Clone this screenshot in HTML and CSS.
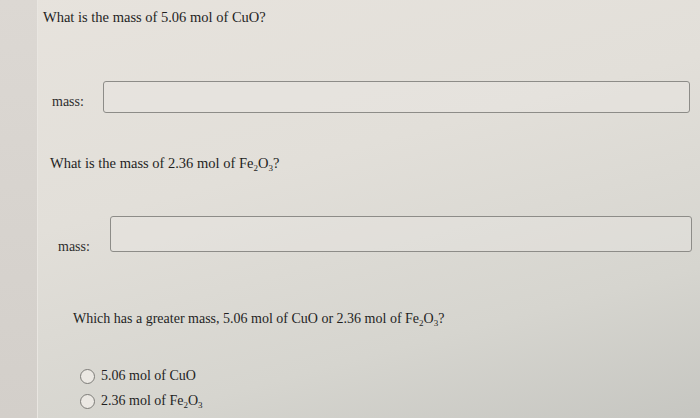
FILE: index.html
```html
<!DOCTYPE html>
<html>
<head>
<meta charset="utf-8">
<link rel="stylesheet" href="styles.css">
</head>
<body>
<div class="page">
  <div class="rail"></div>
  <div class="main">
    <p class="q q1">What is the mass of 5.06 mol of CuO?</p>
    <div class="row row1">
      <span class="lbl">mass:</span>
      <div class="box"></div>
    </div>
    <p class="q q2">What is the mass of 2.36 mol of Fe<sub>2</sub>O<sub>3</sub>?</p>
    <div class="row row2">
      <span class="lbl">mass:</span>
      <div class="box"></div>
    </div>
    <p class="q q3">Which has a greater mass, 5.06 mol of CuO or 2.36 mol of Fe<sub>2</sub>O<sub>3</sub>?</p>
    <div class="opt opt1"><span class="radio"></span><span class="otext">5.06 mol of CuO</span></div>
    <div class="opt opt2"><span class="radio"></span><span class="otext">2.36 mol of Fe<sub>2</sub>O<sub>3</sub></span></div>
  </div>
</div>
</body>
</html>
```

FILE: styles.css
```css
html, body {
  margin: 0;
  padding: 0;
}
body {
  width: 700px;
  height: 418px;
  overflow: hidden;
  font-family: "Liberation Serif", "Times New Roman", serif;
  color: #1f1f1f;
}
.page {
  display: flex;
  width: 700px;
  height: 418px;
  background: linear-gradient(165deg, #e7e3dd 0%, #e2dfd9 40%, #d6d5cf 75%, #c6c6c1 100%);
}
.rail {
  width: 37px;
  flex: none;
  background: linear-gradient(180deg, #dcd8d3 0%, #d3cfca 100%);
  border-right: 1px solid #e9e6e1;
}
.main {
  flex: 1;
  display: flex;
  flex-direction: column;
  align-items: flex-start;
}
.q {
  margin: 0;
  font-family: "Liberation Serif", "Times New Roman", serif;
  font-size: 14.5px;
  line-height: 18px;
}
.q1 { margin-top: 8px; margin-left: 5px; }
.q2 { margin-top: 41px; margin-left: 12px; }
.q3 { margin-top: 54px; margin-left: 35px; font-size: 14px; }
sub {
  font-size: 9px;
  line-height: 0;
  vertical-align: -3px;
}
.row {
  display: flex;
  align-items: flex-start;
  align-self: stretch;
}
.lbl {
  font-family: "Liberation Serif", "Times New Roman", serif;
  font-size: 14px;
  line-height: 18px;
  color: #2e2e2e;
}
.box {
  flex: 1;
  box-sizing: border-box;
  border: 1.5px solid #8d8c88;
  border-radius: 3px;
  background: rgba(236, 233, 228, 0.35);
}
.row1 { margin-top: 55px; margin-left: 14px; margin-right: 10px; }
.row1 .lbl { margin-top: 12px; width: 51px; }
.row1 .box { height: 32px; }
.row2 { margin-top: 44px; margin-left: 20px; margin-right: 8px; }
.row2 .lbl { margin-top: 22px; width: 52px; }
.row2 .box { height: 36px; }
.opt {
  display: flex;
  align-items: center;
  margin-left: 42px;
}
.otext {
  font-family: "Liberation Serif", "Times New Roman", serif;
  font-size: 14px;
  line-height: 18px;
}
.opt1 { margin-top: 39px; }
.opt2 { margin-top: 7px; }
.radio {
  width: 15px;
  height: 15px;
  flex: none;
  box-sizing: border-box;
  border: 1.5px solid #7d7c78;
  border-radius: 50%;
  background: #ebe8e3;
  margin-right: 6px;
}
```
